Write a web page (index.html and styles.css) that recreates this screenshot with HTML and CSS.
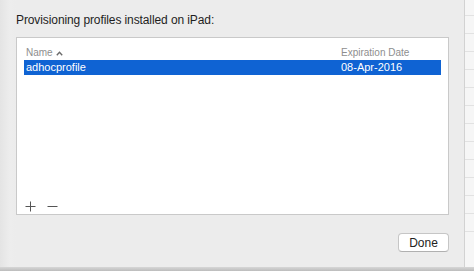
FILE: index.html
```html
<!DOCTYPE html>
<html>
<head>
<meta charset="utf-8">
<link rel="stylesheet" href="styles.css">
</head>
<body>
<div class="screen">
  <div class="top">
    <div class="sheet">
      <div class="title">Provisioning profiles installed on iPad:</div>
      <div class="table">
        <div class="row header">
          <span class="col-name">Name <svg class="sort" width="7" height="5" viewBox="0 0 7 5"><path d="M0.8 4.2 L3.5 1.3 L6.2 4.2" fill="none" stroke="#6a6a6a" stroke-width="1.4"/></svg></span>
          <span class="col-date">Expiration Date</span>
        </div>
        <div class="row selected">
          <span class="col-name">adhocprofile</span>
          <span class="col-date">08-Apr-2016</span>
        </div>
        <div class="spacer"></div>
        <div class="tools">
          <svg width="11" height="11" viewBox="0 0 11 11"><path d="M5.5 0.5 V10.5 M0.5 5.5 H10.5" stroke="#555" stroke-width="1"/></svg>
          <svg width="11" height="11" viewBox="0 0 11 11"><path d="M0.5 5.5 H10.5" stroke="#555" stroke-width="1"/></svg>
        </div>
      </div>
      <div class="footer">
        <button class="btn">Done</button>
      </div>
    </div>
    <div class="behind">
      <div class="line"></div>
      <div class="line"></div>
      <div class="line"></div>
      <div class="line"></div>
      <div class="line"></div>
      <div class="line"></div>
      <div class="line"></div>
      <div class="line"></div>
      <div class="line"></div>
      <div class="line"></div>
      <div class="line"></div>
      <div class="line"></div>
      <div class="line"></div>
    </div>
  </div>
  <div class="bottom"></div>
</div>
</body>
</html>
```

FILE: styles.css
```css
html, body {
  margin: 0;
  padding: 0;
  width: 474px;
  height: 271px;
  overflow: hidden;
  background: #c9c9c9;
  font-family: "Liberation Sans", Arial, sans-serif;
}
.screen {
  display: flex;
  flex-direction: column;
  width: 474px;
  height: 271px;
}
.top {
  display: flex;
  height: 267px;
}
.sheet {
  width: 465px;
  height: 267px;
  box-sizing: border-box;
  background: linear-gradient(to right, #e4e4e4 0px, #ededed 10px, #ececec 16px, #ececec 100%);
  border-right: 1px solid #d2d2d2;
  padding: 13px 0 0 16px;
  display: flex;
  flex-direction: column;
}
.title {
  font-size: 12px;
  color: #1e1e1e;
  height: 15px;
  line-height: 15px;
  letter-spacing: -0.1px;
}
.table {
  margin-top: 9px;
  width: 433px;
  height: 178px;
  box-sizing: border-box;
  background: #fff;
  border: 1px solid #c9c9c9;
  display: flex;
  flex-direction: column;
  padding: 0 7px;
}
.row {
  display: flex;
  height: 15px;
  line-height: 15px;
  font-size: 11px;
  padding-left: 2px;
}
.header {
  margin-top: 7px;
  color: #8e8e8e;
  font-size: 10px;
}
.selected {
  background: #0f63d3;
  color: #fff;
}
.col-name {
  width: 315px;
  display: flex;
  align-items: center;
  gap: 3px;
}
.sort {
  margin-top: 1px;
}
.col-date {
  flex: 1;
}
.spacer {
  flex: 1;
}
.tools {
  display: flex;
  gap: 11px;
  height: 13px;
  padding-left: 1px;
  margin-bottom: 1px;
  align-items: center;
}
.footer {
  display: flex;
  justify-content: flex-end;
  padding-right: 15px;
  margin-top: 18px;
}
.btn {
  width: 51px;
  height: 19px;
  box-sizing: border-box;
  background: #fff;
  border: 1px solid #c6c6c6;
  border-bottom-color: #b0b0b0;
  border-radius: 4px;
  font-family: "Liberation Sans", Arial, sans-serif;
  font-size: 12px;
  color: #222;
  padding: 0;
  line-height: 16px;
}
.behind {
  flex: 1;
  background: #f6f6f6;
  display: flex;
  flex-direction: column;
  padding-top: 15px;
  gap: 17px;
}
.line {
  height: 1px;
  background: #e2e2e2;
}
.bottom {
  height: 4px;
  background: linear-gradient(#d6d6d6, #bcbcbc);
}
```
